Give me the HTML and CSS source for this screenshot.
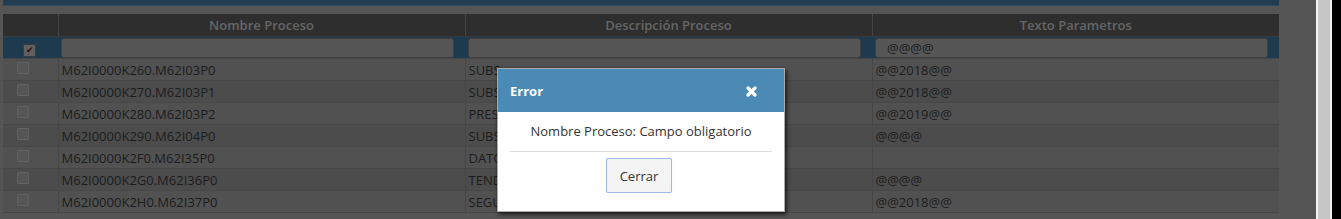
FILE: index.html
```html
<!DOCTYPE html>
<html>
<head>
    <meta charset="utf-8">
    <title>Procesos</title>
    <link rel="stylesheet" href="styles.css">
</head>
<body>
<div class="page">
    <div class="main">
        <div class="topbar"></div>
        <table class="grid">
            <colgroup>
                <col class="c-chk"><col><col><col>
            </colgroup>
            <tr class="hdr">
                <th></th>
                <th>Nombre Proceso</th>
                <th>Descripción Proceso</th>
                <th>Texto Parametros</th>
            </tr>
            <tr class="filter">
                <td class="chk"><span class="box checked">&#10004;</span></td>
                <td><input type="text" value=""></td>
                <td><input type="text" value=""></td>
                <td><input type="text" value="@@@@"></td>
            </tr>
            <tr class="odd"><td class="chk"><span class="box"></span></td><td>M62I0000K260.M62I03P0</td><td>SUBS</td><td>@@2018@@</td></tr>
            <tr><td class="chk"><span class="box"></span></td><td>M62I0000K270.M62I03P1</td><td>SUBS</td><td>@@2018@@</td></tr>
            <tr class="odd"><td class="chk"><span class="box"></span></td><td>M62I0000K280.M62I03P2</td><td>PRES</td><td>@@2019@@</td></tr>
            <tr><td class="chk"><span class="box"></span></td><td>M62I0000K290.M62I04P0</td><td>SUBS</td><td>@@@@</td></tr>
            <tr class="odd"><td class="chk"><span class="box"></span></td><td>M62I0000K2F0.M62I35P0</td><td>DATO</td><td></td></tr>
            <tr><td class="chk"><span class="box"></span></td><td>M62I0000K2G0.M62I36P0</td><td>TEND</td><td>@@@@</td></tr>
            <tr class="odd"><td class="chk"><span class="box"></span></td><td>M62I0000K2H0.M62I37P0</td><td>SEGU</td><td>@@2018@@</td></tr>
        </table>
    </div>
    <div class="scroll"><div class="thumb"></div></div>
</div>

<div class="dialog">
    <div class="dlg-head">
        <span class="dlg-title">Error</span>
        <svg class="dlg-close" width="11" height="11" viewBox="0 0 11 11">
            <path d="M2 2 L9 9 M9 2 L2 9" stroke="#fff" stroke-width="3.2" stroke-linecap="round"/>
        </svg>
    </div>
    <div class="dlg-body">Nombre Proceso: Campo obligatorio</div>
    <div class="dlg-foot">
        <button>Cerrar</button>
    </div>
</div>
</body>
</html>
```

FILE: styles.css
```css
/* fondo oscurecido por el modal */
body { margin: 0; background: #555; font-family: "Open Sans", "Liberation Sans", sans-serif; font-size: 13px; overflow: hidden; width: 1341px; height: 219px; position: relative; }
.page { display: flex; height: 219px; }
.main { width: 1313px; padding-left: 3px; }
.topbar { width: 1276px; height: 5px; background: #223d52; border-bottom: 1px solid #2f4a5e; margin-bottom: 8px; }

.grid { width: 1276px; table-layout: fixed; border-collapse: collapse; }
.grid col.c-chk { width: 55px; }
.grid th, .grid td { padding: 0; overflow: hidden; white-space: nowrap; }
.hdr th { height: 22px; background: #2e2e2e; color: #666; font-weight: 600; text-align: center; border-left: 1px solid #444; border-bottom: 1px solid #3a3a3a; }
.hdr th:first-child { border-left: none; }

.filter td { height: 22px; background: #1e3a4e; border-bottom: 1px solid #333; }
.filter input { display: block; box-sizing: border-box; width: calc(100% - 14px); height: 20px; margin-left: 3px; border: 1px solid #3f3f3f; border-radius: 3px; background: #565656; padding: 0 11px; font-family: inherit; font-size: 13px; color: #1c1c1c; }

.grid tr td { height: 21px; color: #1c1c1c; padding-left: 3px; background: #4c4c4c; border-bottom: 1px solid #474747; border-left: 1px solid #464646; }
.grid tr.odd td { background: #515151; }
.grid tr.filter td { background: #1e3a4e; border-left: none; padding-left: 0; }
.grid td.chk { text-align: center; padding-left: 0; border-left: none; }
.box { display: inline-block; width: 10px; height: 10px; border: 1px solid #616161; background: #565656; border-radius: 1px; vertical-align: 1px; margin-left: -14px; line-height: 10px; font-size: 9px; color: #3d0b0b; }
.box.checked { width: 11px; height: 11px; background: #606060; border-color: #3b3b3b; margin-left: -2px; vertical-align: -1px; }

.scroll { width: 25px; display: flex; background: #000; }
.thumb { width: 12px; background: #c6c6c6; border-left: 2px solid #f4f4f4; border-right: 2px solid #f0f0f0; }

.dialog { position: absolute; left: 497px; top: 68px; width: 288px; height: 144px; background: #fff; box-shadow: 2px 3px 4px rgba(0,0,0,0.55), 0 0 2px rgba(0,0,0,0.5); border: 1px solid #ababab; box-sizing: border-box; }
.dlg-head { height: 43px; background: #4a8ab5; display: flex; align-items: center; padding: 0 0 0 12px; color: #fff; }
.dlg-title { font-weight: 700; font-size: 13px; flex: 1; }
.dlg-close { margin-right: 27px; margin-top: 2px; }
.dlg-body { text-align: center; color: #333; padding-top: 10px; height: 29px; border-bottom: 1px solid #ddd; margin: 0 12px; }
.dlg-foot { text-align: center; padding-top: 6px; padding-right: 4px; }
.dlg-foot button { width: 66px; height: 35px; background: #f4f4f4; border: 1px solid #9db8e6; border-radius: 2px; font-family: inherit; font-size: 13px; color: #333; padding: 0; box-shadow: 0 0 1px #bcd0f0; }
```
